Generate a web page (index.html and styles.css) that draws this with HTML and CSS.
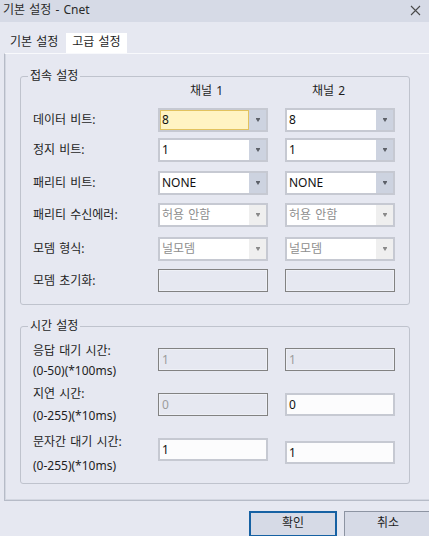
FILE: index.html
```html
<!DOCTYPE html>
<html lang="ko">
<head>
<meta charset="utf-8">
<link rel="stylesheet" href="styles.css">
</head>
<body>
<div class="titlebar">
  <span class="title">기본 설정 - Cnet</span>
  <svg class="close" width="11" height="11" viewBox="0 0 11 11"><path d="M1 1 L10 10 M10 1 L1 10" stroke="#4a4a4a" stroke-width="1.1" fill="none"/></svg>
</div>
<div class="tabs">
  <div class="tab">기본 설정</div>
  <div class="tab active">고급 설정</div>
</div>
<div class="panel">
  <fieldset class="group g1">
    <legend>접속 설정</legend>
    <div class="head">
      <span></span><span class="h1">채널 1</span><span class="h2">채널 2</span>
    </div>
    <div class="grid1">
      <div class="lbl">데이터 비트:</div>
      <div class="combo"><span class="val focus">8</span><span class="btn"><i class="arr"></i></span></div>
      <div class="combo"><span class="val">8</span><span class="btn"><i class="arr"></i></span></div>

      <div class="lbl">정지 비트:</div>
      <div class="combo"><span class="val">1</span><span class="btn"><i class="arr"></i></span></div>
      <div class="combo"><span class="val">1</span><span class="btn"><i class="arr"></i></span></div>

      <div class="lbl">패리티 비트:</div>
      <div class="combo"><span class="val">NONE</span><span class="btn"><i class="arr"></i></span></div>
      <div class="combo"><span class="val">NONE</span><span class="btn"><i class="arr"></i></span></div>

      <div class="lbl">패리티 수신에러:</div>
      <div class="combo dis"><span class="val">허용 안함</span><span class="btn"><i class="arr"></i></span></div>
      <div class="combo dis"><span class="val">허용 안함</span><span class="btn"><i class="arr"></i></span></div>

      <div class="lbl">모뎀 형식:</div>
      <div class="combo dis"><span class="val">널모뎀</span><span class="btn"><i class="arr"></i></span></div>
      <div class="combo dis"><span class="val">널모뎀</span><span class="btn"><i class="arr"></i></span></div>

      <div class="lbl short">모뎀 초기화:</div>
      <div class="tb dis"></div>
      <div class="tb dis"></div>
    </div>
  </fieldset>

  <fieldset class="group g2">
    <legend>시간 설정</legend>
    <div class="trow r1">
      <div class="tl"><div>응답 대기 시간:</div><div class="l2">(0-50)(*100ms)</div></div>
      <div class="tb dis">1</div>
      <div class="tb dis">1</div>
    </div>
    <div class="trow r2">
      <div class="tl"><div>지연 시간:</div><div class="l2">(0-255)(*10ms)</div></div>
      <div class="tb dis">0</div>
      <div class="tb">0</div>
    </div>
    <div class="trow r3">
      <div class="tl"><div>문자간 대기 시간:</div><div class="l2">(0-255)(*10ms)</div></div>
      <div class="tb c1">1</div>
      <div class="tb c2">1</div>
    </div>
  </fieldset>
</div>
<div class="buttons">
  <div class="button default">확인</div>
  <div class="button">취소</div>
</div>
</body>
</html>
```
FILE: styles.css
```css
* { box-sizing: border-box; }
html, body {
  margin: 0;
  padding: 0;
  overflow: hidden;
}
body {
  width: 429px;
  height: 536px;
  background: #e6e8f1;
  font-family: "Noto Sans", "Noto Sans CJK KR", sans-serif;
  font-size: 12px;
  word-spacing: 1px;
  color: #1e1e1e;
}
.titlebar {
  height: 22px;
  background: #d6dae6;
  display: flex;
  align-items: center;
  justify-content: space-between;
  padding: 0 8px 2px 3px;
}
.title {
  line-height: 16px;
  color: #2a2a2a;
}
.close { display: block; margin-top: 1px; }
.tabs {
  height: 31px;
  display: flex;
  align-items: flex-end;
  padding-left: 4px;
  gap: 2px;
}
.tab {
  height: 20px;
  padding: 1px 6px 0;
  line-height: 15px;
}
.tab.active {
  background: #ffffff;
}
.panel {
  margin-left: 4px;
  margin-right: -20px;
  border-top: 1px solid #f8f9fc;
  border-left: 1px solid #b6bbc7;
  border-bottom: 1px solid #b6bbc7;
  box-shadow: inset 1px -1px 0 #d3d7e1;
  padding: 14px 0 16px 15px;
}
.group {
  width: 390px;
  margin: 0;
  border: 1px solid #bfc3cd;
  border-radius: 3px;
  padding: 0 0 0 12px;
  min-inline-size: 0;
}
.group legend {
  margin-left: -5px;
  padding: 0 2px;
  line-height: 16px;
}
.g1 { padding-bottom: 12px; }
.g2 { margin-top: 13px; padding-bottom: 7px; }
.head, .grid1, .trow {
  display: grid;
  grid-template-columns: 108px 110px 110px;
  column-gap: 17px;
}
.head {
  height: 14px;
  line-height: 14px;
}
.h1 { padding-left: 32px; }
.h2 { padding-left: 27px; }
.grid1 {
  margin-top: 10px;
  grid-template-rows: 30px 33px 32px 34px 32px 23px;
  align-items: start;
}
.lbl {
  line-height: 24px;
  height: 24px;
  white-space: nowrap;
}
.lbl.short { line-height: 23px; height: 23px; }
.combo {
  height: 24px;
  border: 2px solid #c6c9d2;
  background: #ffffff;
  display: flex;
}
.val {
  flex: 1;
  padding-left: 2px;
  line-height: 20px;
  color: #111;
}
.val.focus {
  background: #fff3c3;
  border: 1px solid #e2c25e;
  padding-left: 1px;
  line-height: 18px;
}
.btn {
  width: 17px;
  background: #cdd3e0;
  display: flex;
  align-items: center;
  justify-content: center;
}
.arr {
  display: block;
  width: 0;
  height: 0;
  margin-top: 1px;
  border-left: 2.5px solid transparent;
  border-right: 2.5px solid transparent;
  border-top: 3px solid #5d6169;
  box-shadow: 0 -1px 0 #5d6169;
}
.combo.dis .val { color: #8e8e8e; }
.combo.dis .btn { background: #efefef; }
.combo.dis .arr { border-top-color: #8a8a8a; box-shadow: 0 -1px 0 #8a8a8a; }

.tb {
  height: 23px;
  border: 2px solid #c6c9d2;
  background: #fcfcfd;
  padding-left: 2px;
  line-height: 19px;
  color: #111;
}
.tb.dis {
  background: #e6e8f1;
  border: 1px solid #828282;
  box-shadow: inset 0 0 0 1px #eef0f6;
  padding-left: 3px;
  line-height: 21px;
  color: #9c9c9c;
}

.trow { align-items: start; }
.tl { line-height: 20px; white-space: nowrap; }
.r1 { margin-top: 7px; }
.r1 .tb { margin-top: 7px; }
.r2 { margin-top: 3px; }
.r2 .l2 { margin-top: 2px; }
.r2 .tb { margin-top: 9px; }
.r3 { margin-top: 6px; }
.r3 .l2 { margin-top: 4px; }
.r3 .c1 { margin-top: 6px; }
.r3 .c2 { margin-top: 9px; }

.buttons {
  margin-top: 10px;
  display: flex;
  gap: 7px;
  padding-left: 249px;
}
.button {
  flex: none;
  width: 88px;
  height: 26px;
  background: #d6dae6;
  border: 1px solid #8d94a2;
  text-align: center;
  line-height: 22px;
  color: #1e1e1e;
}
.button.default {
  border: 2px solid #1661a3;
  line-height: 20px;
}
```
